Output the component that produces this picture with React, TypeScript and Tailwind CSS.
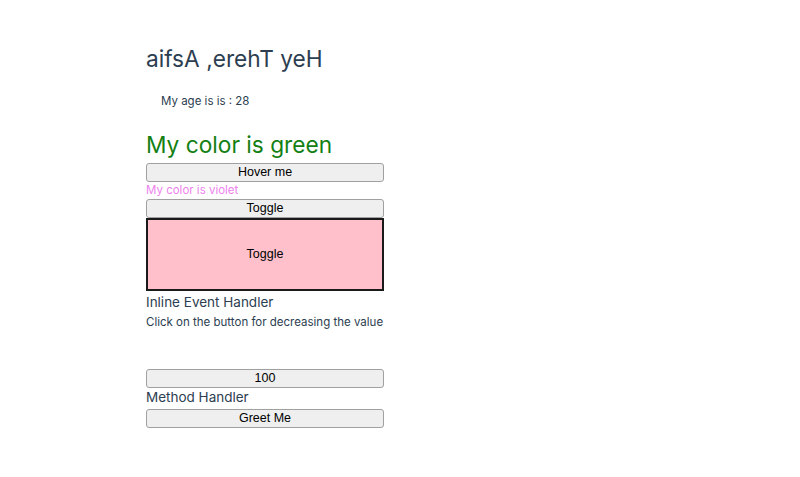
export default function App() {
  const btn =
    "block w-full h-[19px] rounded-[3px] border border-[#a0a0a0] bg-[#efefef] text-[12.5px] leading-none text-black font-['Liberation_Sans',Arial,sans-serif]"
  return (
    <div className="min-h-[477px] bg-white text-[#2c3e50] font-['Inter',sans-serif]">
      <div className="ml-[146px] w-[238px] pt-[44px]">
        <h1 className="text-[22.7px] leading-[30px] whitespace-nowrap">aifsA ,erehT yeH</h1>
        <p className="mt-[20px] pl-[15px] text-[11.5px] leading-[15px]">My age is is : 28</p>

        <h2 className="mt-[18px] text-[22.7px] leading-[36px] text-[#148014] whitespace-nowrap">My color is green</h2>
        <button className={btn}>Hover me</button>
        <p className="text-[11.5px] leading-[16px] text-[#ee82ee]">My color is violet</p>
        <button className={`${btn} mt-[1px]`}>Toggle</button>
        <div className="flex h-[73px] items-center justify-center border-2 border-[#1a1a1a] bg-[#ffc0cb] text-[12.5px] text-black font-['Liberation_Sans',Arial,sans-serif]">
          Toggle
        </div>

        <p className="mt-[2px] text-[13.5px] leading-[18px]">Inline Event Handler</p>
        <p className="mt-[2px] text-[11.5px] leading-[18px] whitespace-nowrap">Click on the button for decreasing the value</p>

        <button className={`${btn} mt-[38px]`}>100</button>
        <p className="text-[13.5px] leading-[19px]">Method Handler</p>
        <button className={`${btn} mt-[2px]`}>Greet Me</button>
      </div>
    </div>
  )
}
